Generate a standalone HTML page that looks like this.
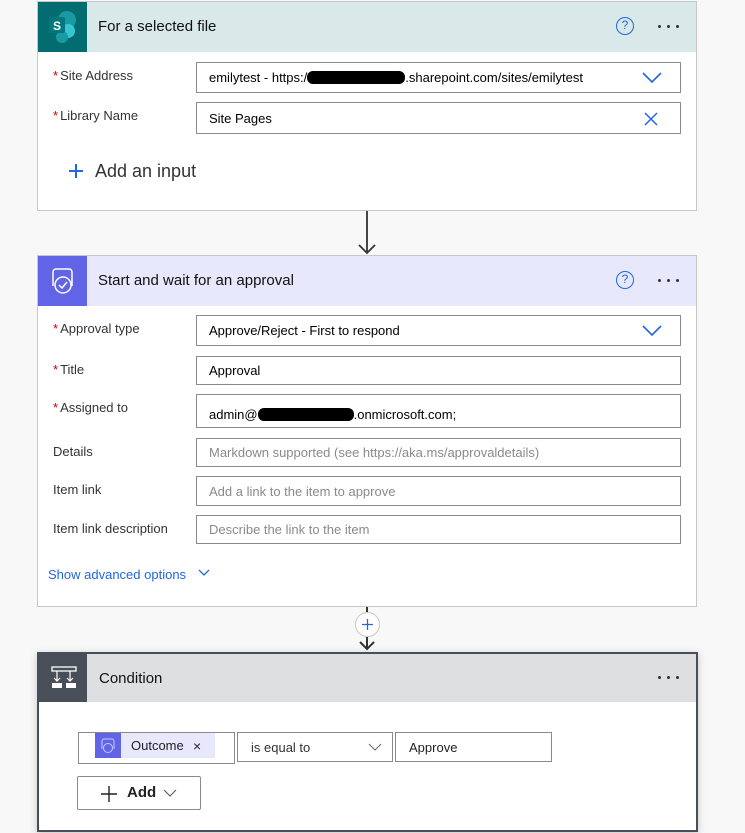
<!DOCTYPE html>
<html><head><style>
*{box-sizing:border-box;margin:0;padding:0}
body{width:745px;height:833px;background:#f8f8f8;font-family:"Liberation Sans",sans-serif;position:relative;overflow:hidden;color:#000}
.abs{position:absolute}
.card{position:absolute;left:37px;width:660px;background:#fff;border:1px solid #c8c8c8}
.hdr{position:absolute;left:0;top:0;right:0;height:50px}
.ico{position:absolute;left:0;top:0;width:49px;height:50px}
.ht{position:absolute;left:60px;top:16px;font-size:15px;color:#111}
.lbl{position:absolute;left:15px;font-size:13px;color:#333}
.lbl b{color:#c00;font-weight:normal;margin-right:2px}
.inp{position:absolute;left:158px;width:485px;border:1px solid #8a8a8a;font-size:13px;padding-left:12px;display:flex;align-items:center;background:#fff}
.ph{color:#8a8a8a}
.redact{display:inline-block;background:#000;height:13px;border-radius:6px;vertical-align:middle}
.help{position:absolute;right:62px;top:15px;width:18px;height:18px;border:1.5px solid #2266e3;border-radius:50%;color:#2266e3;font-size:12px;text-align:center;line-height:15px}
.dots{position:absolute;right:14px;top:23px;width:24px;height:4px}
.dots i{position:absolute;top:0;width:3px;height:3px;border-radius:50%;background:#333}
</style></head><body>

<!-- card 1 -->
<div class="card" style="top:1px;height:210px">
 <div class="hdr" style="background:#d9e8e8"></div>
 <div class="ico" style="background:#036c70">
  <svg width="49" height="50"><circle cx="29" cy="18" r="9" fill="#1a9ba1"/><circle cx="30" cy="29" r="7" fill="#37c6d0"/><circle cx="24" cy="35" r="6" fill="#1a9ba1"/><rect x="11" y="15" width="16" height="16" rx="2" fill="#03787c"/><text x="15" y="28" font-size="12" font-weight="bold" fill="#fff" font-family="Liberation Sans">S</text></svg>
 </div>
 <div class="ht">For a selected file</div>
 <div class="help">?</div><div class="dots"><i style="left:0"></i><i style="left:9px"></i><i style="left:18px"></i></div>
 <div class="lbl" style="top:66px"><b>*</b>Site Address</div>
 <div class="inp" style="top:60px;height:31px">emilytest - https:/<span class="redact" style="width:98px"></span>.sharepoint.com/sites/emilytest
  <svg class="abs" style="right:18px;top:9px" width="20" height="12"><path d="M1 1 L10 10 L19 1" stroke="#2266e3" stroke-width="1.6" fill="none"/></svg></div>
 <div class="lbl" style="top:106px"><b>*</b>Library Name</div>
 <div class="inp" style="top:100px;height:32px">Site Pages
  <svg class="abs" style="right:22px;top:9px" width="14" height="14"><path d="M1 1 L13 13 M13 1 L1 13" stroke="#2266e3" stroke-width="1.5"/></svg></div>
 <svg class="abs" style="left:30px;top:161px" width="16" height="16"><path d="M8 1 V15 M1 8 H15" stroke="#2266e3" stroke-width="2"/></svg>
 <div class="abs" style="left:57px;top:159px;font-size:18px;color:#333">Add an input</div>
</div>

<!-- arrow 1 -->
<svg class="abs" style="left:357px;top:211px" width="20" height="44"><path d="M10 0 V42 M2 34 L10 42 L18 34" stroke="#333" stroke-width="1.8" fill="none"/></svg>

<!-- card 2 -->
<div class="card" style="top:255px;height:352px">
 <div class="hdr" style="background:#e8e8fc"></div>
 <div class="ico" style="background:#6264e8">
  <svg width="49" height="50"><path d="M15 30 V16 a3 3 0 0 1 3-3 H31 a3 3 0 0 1 3 3 V30" stroke="#fff" stroke-width="1.5" fill="none"/><circle cx="25" cy="29" r="8" stroke="#fff" stroke-width="1.5" fill="#6264e8"/><path d="M21 29 l3 3 l5-6" stroke="#fff" stroke-width="1.5" fill="none"/></svg>
 </div>
 <div class="ht">Start and wait for an approval</div>
 <div class="help">?</div><div class="dots"><i style="left:0"></i><i style="left:9px"></i><i style="left:18px"></i></div>
 <div class="lbl" style="top:65px"><b>*</b>Approval type</div>
 <div class="inp" style="top:59px;height:31px">Approve/Reject - First to respond
  <svg class="abs" style="right:18px;top:9px" width="20" height="12"><path d="M1 1 L10 10 L19 1" stroke="#2266e3" stroke-width="1.6" fill="none"/></svg></div>
 <div class="lbl" style="top:106px"><b>*</b>Title</div>
 <div class="inp" style="top:100px;height:29px">Approval</div>
 <div class="lbl" style="top:144px"><b>*</b>Assigned to</div>
 <div class="inp" style="top:138px;height:34px;padding-top:6px">admin@<span class="redact" style="width:96px"></span>.onmicrosoft.com;</div>
 <div class="lbl" style="top:188px">Details</div>
 <div class="inp ph" style="top:182px;height:29px">Markdown supported (see https://aka.ms/approvaldetails)</div>
 <div class="lbl" style="top:226px">Item link</div>
 <div class="inp ph" style="top:220px;height:30px">Add a link to the item to approve</div>
 <div class="lbl" style="top:265px">Item link description</div>
 <div class="inp ph" style="top:259px;height:29px">Describe the link to the item</div>
 <div class="abs" style="left:10px;top:311px;font-size:13px;color:#2266e3">Show advanced options</div>
 <svg class="abs" style="left:160px;top:313px" width="12" height="8"><path d="M1 1 L6 6 L11 1" stroke="#2266e3" stroke-width="1.3" fill="none"/></svg>
</div>

<!-- connector 2 -->
<div class="abs" style="left:366px;top:607px;width:2px;height:5px;background:#333"></div>
<div class="abs" style="left:355px;top:612px;width:25px;height:25px;border-radius:50%;border:1.5px solid #c8c8c8;background:#fff"></div>
<svg class="abs" style="left:361px;top:618px" width="13" height="13"><path d="M6.5 1 V12 M1 6.5 H12" stroke="#2266e3" stroke-width="1.3"/></svg>
<svg class="abs" style="left:357px;top:637px" width="20" height="14"><path d="M10 0 V12 M3 5 L10 12 L17 5" stroke="#333" stroke-width="2" fill="none"/></svg>

<!-- card 3 -->
<div class="abs" style="left:37px;top:652px;width:661px;height:180px;background:#fff;border:2px solid #484f58;box-shadow:0 2px 8px rgba(0,0,0,.2)">
 <div class="hdr" style="background:#dedfe1;height:48px"></div>
 <div class="ico" style="background:#484f58;width:48px;height:48px">
  <svg width="48" height="48"><rect x="13" y="13" width="24" height="4" fill="none" stroke="#fff" stroke-width="1.3"/><path d="M18 17 V27 M15 24 L18 27 L21 24 M31 17 V27 M28 24 L31 27 L34 24" stroke="#fff" stroke-width="1.2" fill="none"/><rect x="13" y="29" width="10" height="5" fill="#fff"/><rect x="27" y="29" width="10" height="5" fill="#fff"/></svg>
 </div>
 <div class="ht" style="left:60px;top:16px">Condition</div>
 <div class="dots" style="top:22px"><i style="left:0"></i><i style="left:9px"></i><i style="left:18px"></i></div>
 <div class="abs" style="left:39px;top:78px;width:157px;height:32px;border:1px solid #8a8a8a"></div>
 <div class="abs" style="left:56px;top:79px;width:120px;height:25px;background:#e8e8fc"></div>
 <div class="abs" style="left:56px;top:79px;width:26px;height:25px;background:#6264e8">
  <svg width="26" height="25"><path d="M7 16 V8 a2 2 0 0 1 2-2 H17 a2 2 0 0 1 2 2 V16" stroke="#c9caf7" stroke-width="1" fill="none"/><circle cx="13" cy="15" r="4.5" stroke="#c9caf7" stroke-width="1" fill="#6264e8"/></svg></div>
 <div class="abs" style="left:92px;top:84px;font-size:13px;color:#222">Outcome</div>
 <div class="abs" style="left:154px;top:84px;font-size:14px;color:#222">×</div>
 <div class="abs" style="left:198px;top:78px;width:156px;height:30px;border:1px solid #8a8a8a;font-size:13px;padding:7px 0 0 13px;color:#333">is equal to</div>
 <svg class="abs" style="left:329px;top:89px" width="14" height="8"><path d="M1 1 L7 7 L13 1" stroke="#666" stroke-width="1" fill="none"/></svg>
 <div class="abs" style="left:356px;top:78px;width:157px;height:30px;border:1px solid #8a8a8a;font-size:13px;padding:7px 0 0 13px;color:#222">Approve</div>
 <div class="abs" style="left:38px;top:122px;width:124px;height:34px;border:1px solid #8a8a8a;border-radius:2px"></div>
 <svg class="abs" style="left:61px;top:131px" width="18" height="18"><path d="M9 1 V17 M1 9 H17" stroke="#222" stroke-width="1.4"/></svg>
 <div class="abs" style="left:88px;top:130px;font-size:15px;font-weight:bold;color:#222">Add</div>
 <svg class="abs" style="left:124px;top:135px" width="14" height="8"><path d="M1 1 L7 7 L13 1" stroke="#555" stroke-width="1" fill="none"/></svg>
</div>
</body></html>
